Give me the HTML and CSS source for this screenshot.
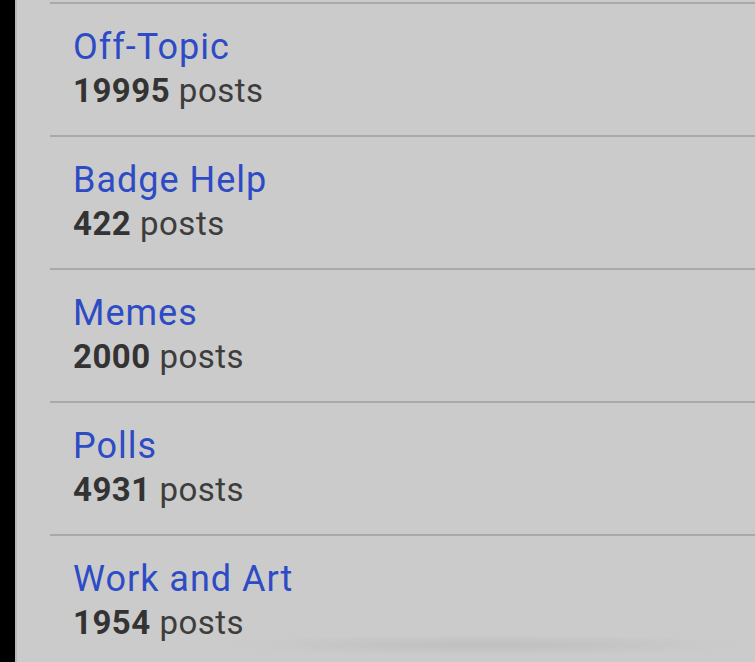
FILE: index.html
```html
<!DOCTYPE html>
<html lang="en">
<head>
  <meta charset="UTF-8">
  <meta name="viewport" content="width=device-width, initial-scale=1.0">
  <title>Forums</title>
  <link rel="stylesheet" href="styles.css">
</head>
<body>

  <div class="rail"></div>

  <div class="forums">
    <ul class="forum-list">
      <li class="forum">
        <a class="forum-name" href="#">Off-Topic</a>
        <div class="forum-count"><b>19995</b> posts</div>
      </li>
      <li class="forum">
        <a class="forum-name" href="#">Badge Help</a>
        <div class="forum-count"><b>422</b> posts</div>
      </li>
      <li class="forum">
        <a class="forum-name" href="#">Memes</a>
        <div class="forum-count"><b>2000</b> posts</div>
      </li>
      <li class="forum">
        <a class="forum-name" href="#">Polls</a>
        <div class="forum-count"><b>4931</b> posts</div>
      </li>
      <li class="forum">
        <a class="forum-name" href="#">Work and Art</a>
        <div class="forum-count"><b>1954</b> posts</div>
      </li>
    </ul>
    <!-- soft shadow under the last row -->
    <div class="fade"></div>
  </div>

</body>
</html>
```

FILE: styles.css
```css
/* Global Styles */
body {
  font-family: Roboto, "Noto Sans", sans-serif;
  background: #cbcbcb;
  margin: 0;
  padding: 0;
  display: flex;
  height: 100vh;
  overflow: hidden;
}

.rail {
  width: 15px;
  flex-shrink: 0;
  background: #000;
  border-right: 2px solid #b9b9b9;
}

.forums {
  position: relative;
  flex: 1;
  padding-left: 33px;
  padding-top: 2px;
}

.forum-list {
  list-style-type: none;
  margin: 0;
  padding: 0;
}

.forum {
  border-top: 2px solid #a9a9a9;
  padding: 21px 0 22px 23px;
}

.forum-name {
  display: block;
  font-size: 36px;
  line-height: 44px;
  letter-spacing: 1px;
  color: #2e4bc6;
  text-decoration: none;
}

.forum-count {
  font-size: 33px;
  line-height: 44px;
  letter-spacing: 0.5px;
  color: #3d3d3d;
}

.forum-count b {
  color: #333;
  font-weight: 700;
}

.fade {
  position: absolute;
  left: 200px;
  right: 0;
  top: 634px;
  height: 22px;
  background: radial-gradient(ellipse at center, rgba(0, 0, 0, 0.06), rgba(0, 0, 0, 0) 70%);
}
```
